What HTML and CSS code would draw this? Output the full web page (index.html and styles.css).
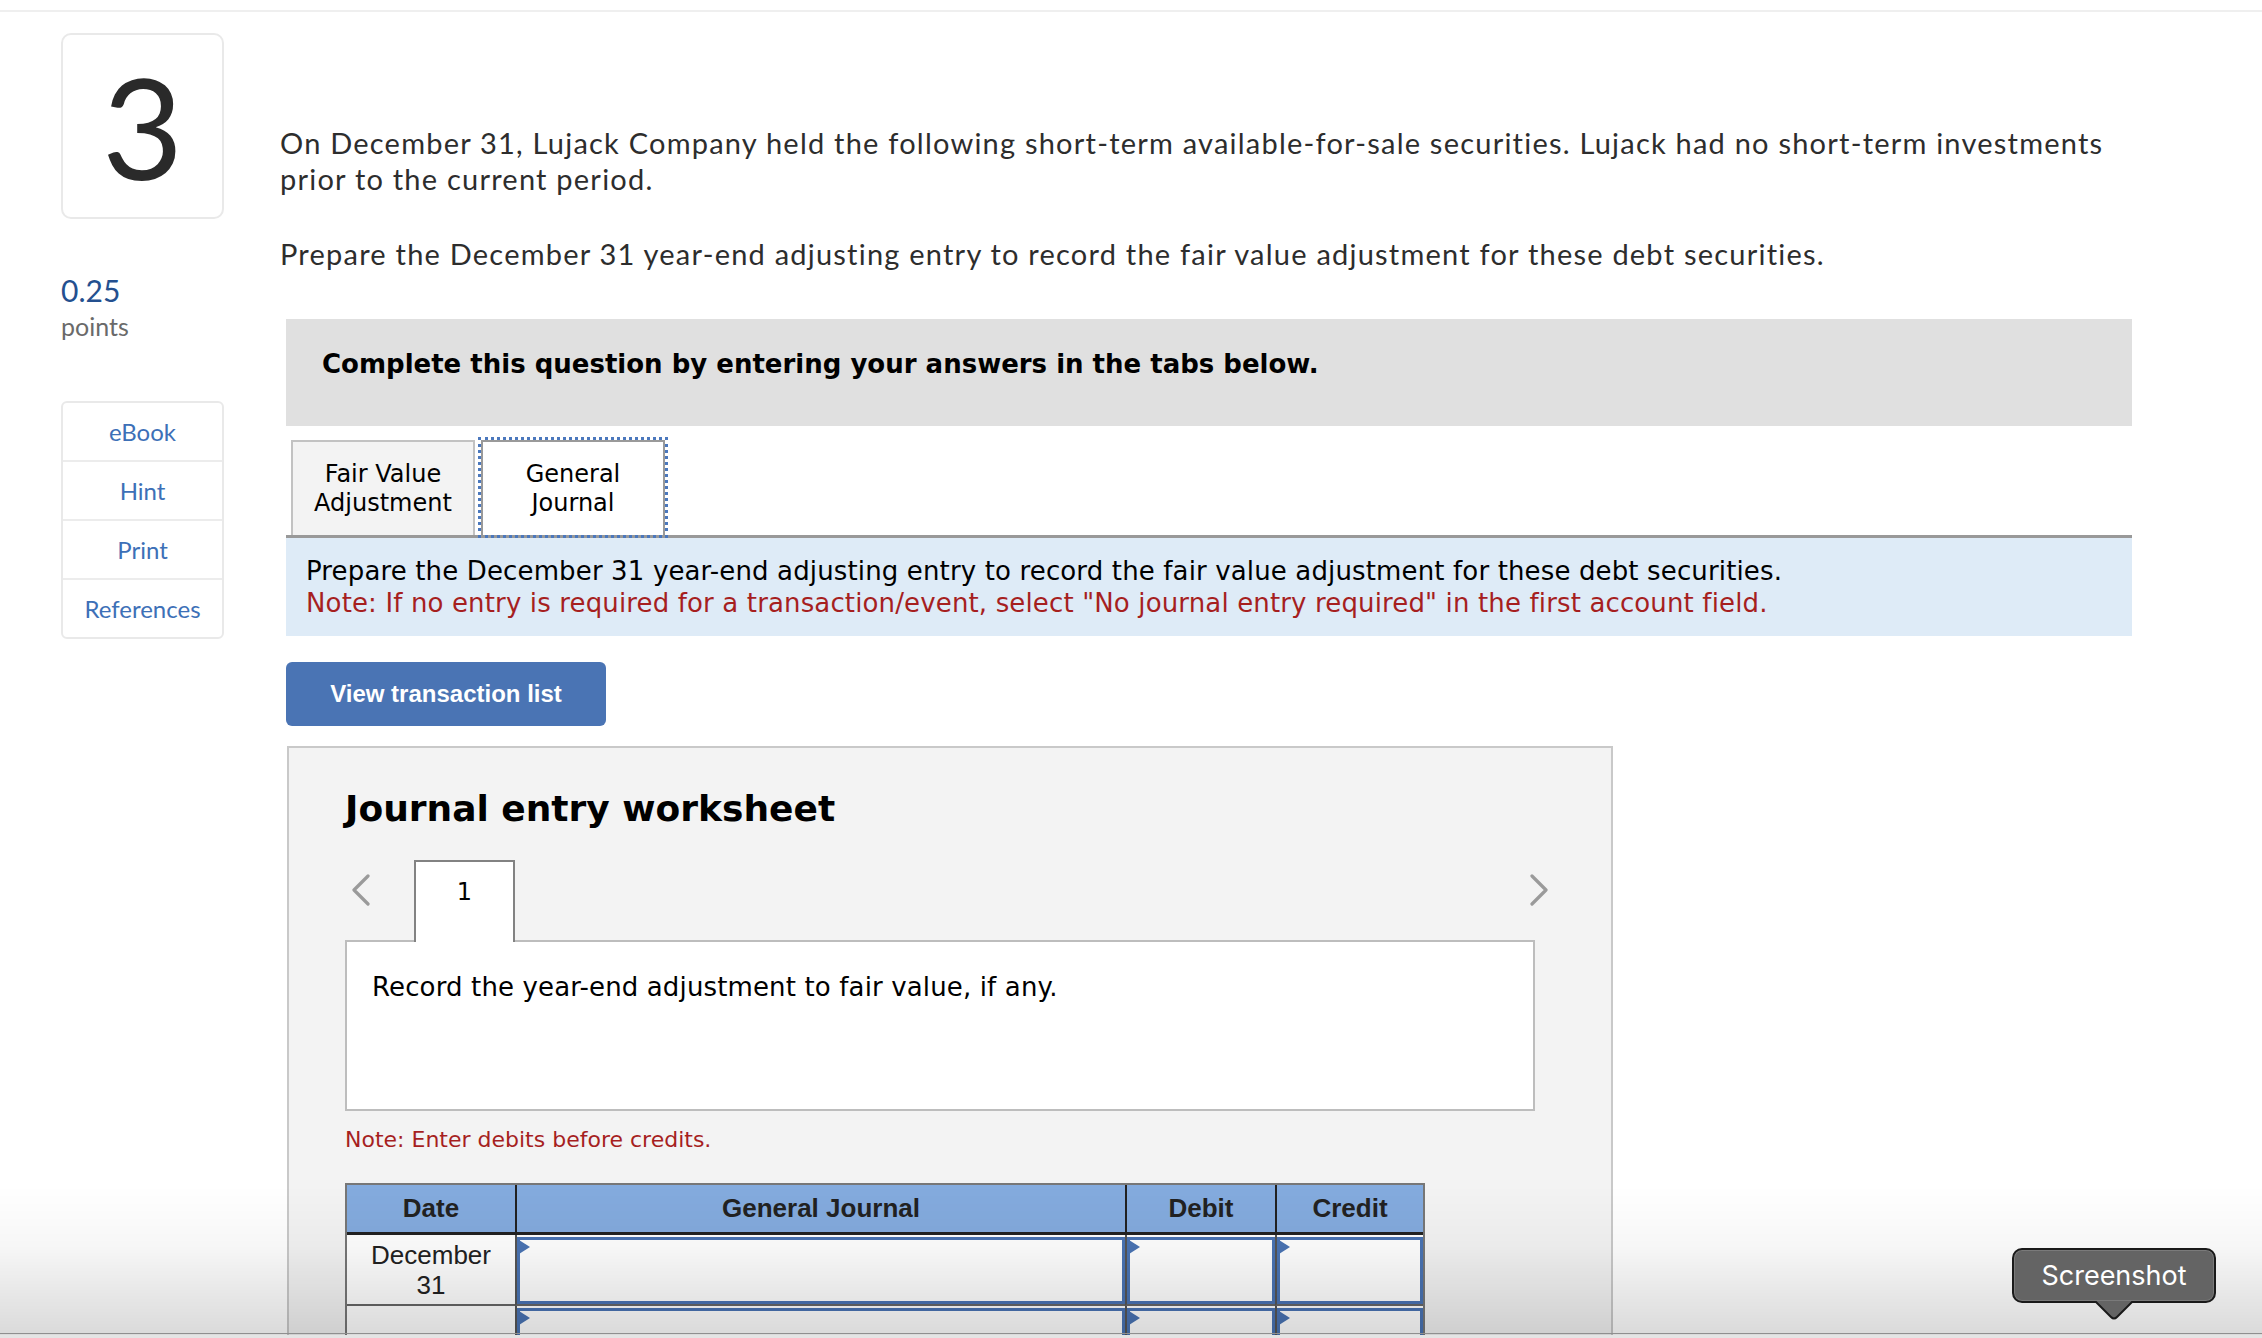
FILE: index.html
```html
<!DOCTYPE html>
<html lang="en">
<head>
<meta charset="utf-8">
<title>Question 3</title>
<link rel="stylesheet" href="styles.css">
</head>
<body>
<div class="topbar"></div>
<div class="page">
  <aside class="sidebar">
    <div class="qnum">3</div>
    <div class="pts-val">0.25</div>
    <div class="pts-label">points</div>
    <nav class="links">
      <a class="link">eBook</a>
      <a class="link">Hint</a>
      <a class="link">Print</a>
      <a class="link">References</a>
    </nav>
  </aside>
  <main class="main">
    <p class="qtext">On December 31, Lujack Company held the following short-term available-for-sale securities. Lujack had no short-term investments prior to the current period.</p>
    <p class="qtext qtext2">Prepare the December 31 year-end adjusting entry to record the fair value adjustment for these debt securities.</p>

    <section class="answer">
      <div class="instr">Complete this question by entering your answers in the tabs below.</div>
      <div class="tabs">
        <div class="tab">Fair Value<br>Adjustment</div>
        <div class="tab tab-active">General<br>Journal</div>
      </div>
      <div class="info">
        <div>Prepare the December 31 year-end adjusting entry to record the fair value adjustment for these debt securities.</div>
        <div class="red">Note: If no entry is required for a transaction/event, select "No journal entry required" in the first account field.</div>
      </div>
      <button class="btn">View transaction list</button>

      <div class="panel">
        <h2 class="panel-title">Journal entry worksheet</h2>
        <div class="nav">
          <span class="chev chev-left"><svg width="20" height="32" viewBox="0 0 20 32"><path d="M17 2 L3 16 L17 30" fill="none" stroke="#9a9a9a" stroke-width="3.2" stroke-linecap="round" stroke-linejoin="round"/></svg></span>
          <div class="etab">1</div>
          <span class="nav-fill"></span>
          <span class="chev chev-right"><svg width="20" height="32" viewBox="0 0 20 32"><path d="M3 2 L17 16 L3 30" fill="none" stroke="#9a9a9a" stroke-width="3.2" stroke-linecap="round" stroke-linejoin="round"/></svg></span>
        </div>
        <div class="entry">Record the year-end adjustment to fair value, if any.</div>
        <div class="note">Note: Enter debits before credits.</div>
        <div class="jtable">
          <div class="th">Date</div>
          <div class="th">General Journal</div>
          <div class="th">Debit</div>
          <div class="th">Credit</div>

          <div class="td td-date">December<br>31</div>
          <div class="td"><div class="field"></div></div>
          <div class="td"><div class="field"></div></div>
          <div class="td"><div class="field"></div></div>

          <div class="td td-date"></div>
          <div class="td"><div class="field"></div></div>
          <div class="td"><div class="field"></div></div>
          <div class="td"><div class="field"></div></div>
        </div>
      </div>
    </section>
  </main>
</div>

<div class="fade"></div>
<div class="tooltip">
  <span class="tooltip-text">Screenshot</span>
  <svg class="tooltip-arrow" width="40" height="20" viewBox="0 0 40 20"><path d="M1 0 L17 16 Q20 19 23 16 L39 0" fill="#646464" stroke="#1a1a1a" stroke-width="2"/></svg>
</div>
</body>
</html>
```
FILE: styles.css
```css
html, body {
  margin: 0;
  padding: 0;
  height: 100%;
  overflow: hidden;
  background: #ffffff;
}
body {
  font-family: "DejaVu Sans", Verdana, sans-serif;
  color: #111;
}
.topbar {
  height: 10px;
  border-bottom: 2px solid #efefef;
}
.page {
  display: flex;
  padding: 21px 0 0 61px;
}
.sidebar {
  width: 163px;
  flex: none;
  font-family: Lato, "Open Sans", sans-serif;
}
.qnum {
  box-sizing: border-box;
  height: 186px;
  border: 2px solid #e9e9e9;
  border-radius: 10px;
  display: flex;
  align-items: center;
  justify-content: center;
  font-size: 140px;
  line-height: 1;
  color: #2a2a2a;
}
.pts-val {
  margin-top: 53px;
  font-size: 30px;
  line-height: 36px;
  color: #24508f;
}
.pts-label {
  margin-top: 3px;
  font-size: 25px;
  line-height: 30px;
  color: #6a6a6a;
}
.links {
  margin-top: 60px;
  border: 2px solid #e9e9e9;
  border-radius: 6px;
  display: flex;
  flex-direction: column;
}
.link {
  height: 57px;
  display: flex;
  align-items: center;
  justify-content: center;
  font-size: 24px;
  color: #3d70b7;
}
.link + .link {
  border-top: 2px solid #ececec;
}
.main {
  margin-left: 56px;
  width: 1852px;
  padding-top: 92px;
}
.qtext {
  margin: 0;
  font-family: Lato, "Open Sans", sans-serif;
  font-size: 29px;
  line-height: 36px;
  color: #2d2d2d;
  letter-spacing: 1.22px;
  padding-right: 10px;
}
.qtext2 {
  margin-top: 39px;
}
.answer {
  margin-top: 47px;
  margin-left: 6px;
  width: 1846px;
}
.instr {
  box-sizing: border-box;
  height: 107px;
  background: #e0e0e0;
  padding: 30px 0 0 36px;
  font-weight: bold;
  font-size: 26px;
  line-height: 30px;
  color: #000;
}
.tabs {
  margin-top: 14px;
  display: flex;
  align-items: flex-end;
  gap: 6px;
  padding-left: 5px;
  border-bottom: 3px solid #999;
}
.tab {
  box-sizing: border-box;
  width: 184px;
  height: 95px;
  padding-top: 18px;
  text-align: center;
  font-size: 24px;
  line-height: 29px;
  color: #000;
  background: #f3f3f3;
  border: 2px solid #c2c2c2;
  border-bottom: none;
}
.tab-active {
  background: #fff;
  border-color: #9a9a9a;
  outline: 3px dotted #4b78bd;
  outline-offset: 0;
}
.info {
  box-sizing: border-box;
  height: 98px;
  background: #deebf7;
  padding: 17px 20px 0 20px;
  font-size: 26px;
  line-height: 32px;
  letter-spacing: 0.14px;
  color: #000;
}
.red {
  color: #a61f1f;
}
.btn {
  display: block;
  margin-top: 26px;
  width: 320px;
  height: 64px;
  border: none;
  border-radius: 6px;
  background: #4a74b4;
  color: #fff;
  font-family: "Liberation Sans", Arial, sans-serif;
  font-weight: bold;
  font-size: 24px;
  padding: 0;
}
.panel {
  margin-top: 20px;
  margin-left: 1px;
  width: 1326px;
  box-sizing: border-box;
  height: 700px;
  background: #f3f3f3;
  border: 2px solid #c9c9c9;
  padding: 39px 0 0 56px;
}
.panel-title {
  margin: 0;
  font-size: 36px;
  line-height: 44px;
  font-weight: bold;
  color: #000;
}
.nav {
  margin-top: 29px;
  width: 1204px;
  display: flex;
  align-items: center;
  position: relative;
  z-index: 1;
  margin-bottom: -2px;
}
.chev {
  display: flex;
  align-items: center;
  height: 32px;
}
.chev-left {
  width: 63px;
  padding-left: 6px;
  margin-top: -22px;
}
.chev-right {
  margin-top: -22px;
}
.nav-fill {
  flex: 1;
}
.etab {
  box-sizing: border-box;
  width: 101px;
  height: 82px;
  background: #fff;
  border: 2px solid #828282;
  border-bottom: none;
  text-align: center;
  padding-top: 14px;
  font-size: 24px;
  line-height: 32px;
  color: #000;
}
.entry {
  box-sizing: border-box;
  width: 1190px;
  height: 171px;
  background: #fff;
  border: 2px solid #bdbdbd;
  padding: 29px 25px 0 25px;
  font-size: 26px;
  line-height: 32px;
  letter-spacing: 0.14px;
  color: #000;
}
.note {
  margin-top: 15px;
  font-size: 22px;
  line-height: 28px;
  color: #a61f1f;
}
.jtable {
  margin-top: 29px;
  width: 1080px;
  box-sizing: border-box;
  display: grid;
  grid-template-columns: 168px 610px 150px 148px;
  border: 2px solid #777;
  border-bottom: none;
  font-family: "Liberation Sans", Arial, sans-serif;
}
.th {
  height: 47px;
  background: #84abde;
  display: flex;
  align-items: center;
  justify-content: center;
  font-weight: bold;
  font-size: 26px;
  color: #222;
  border-bottom: 3px solid #222;
}
.th + .th {
  border-left: 2px solid #222;
}
.td {
  height: 71px;
  border-bottom: 2px solid #666;
  border-left: 2px solid #555;
  background: #fff;
  box-sizing: border-box;
  padding: 2px 0 0 0;
}
.td-date {
  border-left: none;
  text-align: center;
  font-size: 26px;
  line-height: 30px;
  color: #222;
  padding-top: 5px;
}
.field {
  box-sizing: border-box;
  height: 67px;
  border: 3px solid #4a74b4;
  background: #fff;
  position: relative;
}
.field::before {
  content: "";
  position: absolute;
  left: -1px;
  top: 0;
  border-top: 7px solid transparent;
  border-bottom: 7px solid transparent;
  border-left: 11px solid #4a74b4;
}
.fade {
  position: fixed;
  left: 0;
  right: 0;
  bottom: 0;
  height: 150px;
  background: linear-gradient(to bottom, rgba(0,0,0,0) 0%, rgba(0,0,0,0.03) 40%, rgba(0,0,0,0.14) 98%);
  border-bottom: 3px solid #e4e4e4;
  pointer-events: none;
}
.fade::after {
  content: "";
  position: absolute;
  left: 0;
  right: 0;
  bottom: 1px;
  height: 1px;
  background: #8f8f8f;
}
.tooltip {
  position: fixed;
  left: 2012px;
  top: 1248px;
  box-sizing: border-box;
  width: 204px;
  height: 55px;
  background: #646464;
  border: 2px solid #1a1a1a;
  border-radius: 10px;
  box-shadow: inset 0 0 0 1px #7a7a7a;
  display: flex;
  align-items: center;
  justify-content: center;
}
.tooltip-text {
  font-family: Inter, "Liberation Sans", sans-serif;
  font-size: 27px;
  color: #fff;
}
.tooltip-arrow {
  position: absolute;
  left: 80px;
  top: 51px;
}
```
